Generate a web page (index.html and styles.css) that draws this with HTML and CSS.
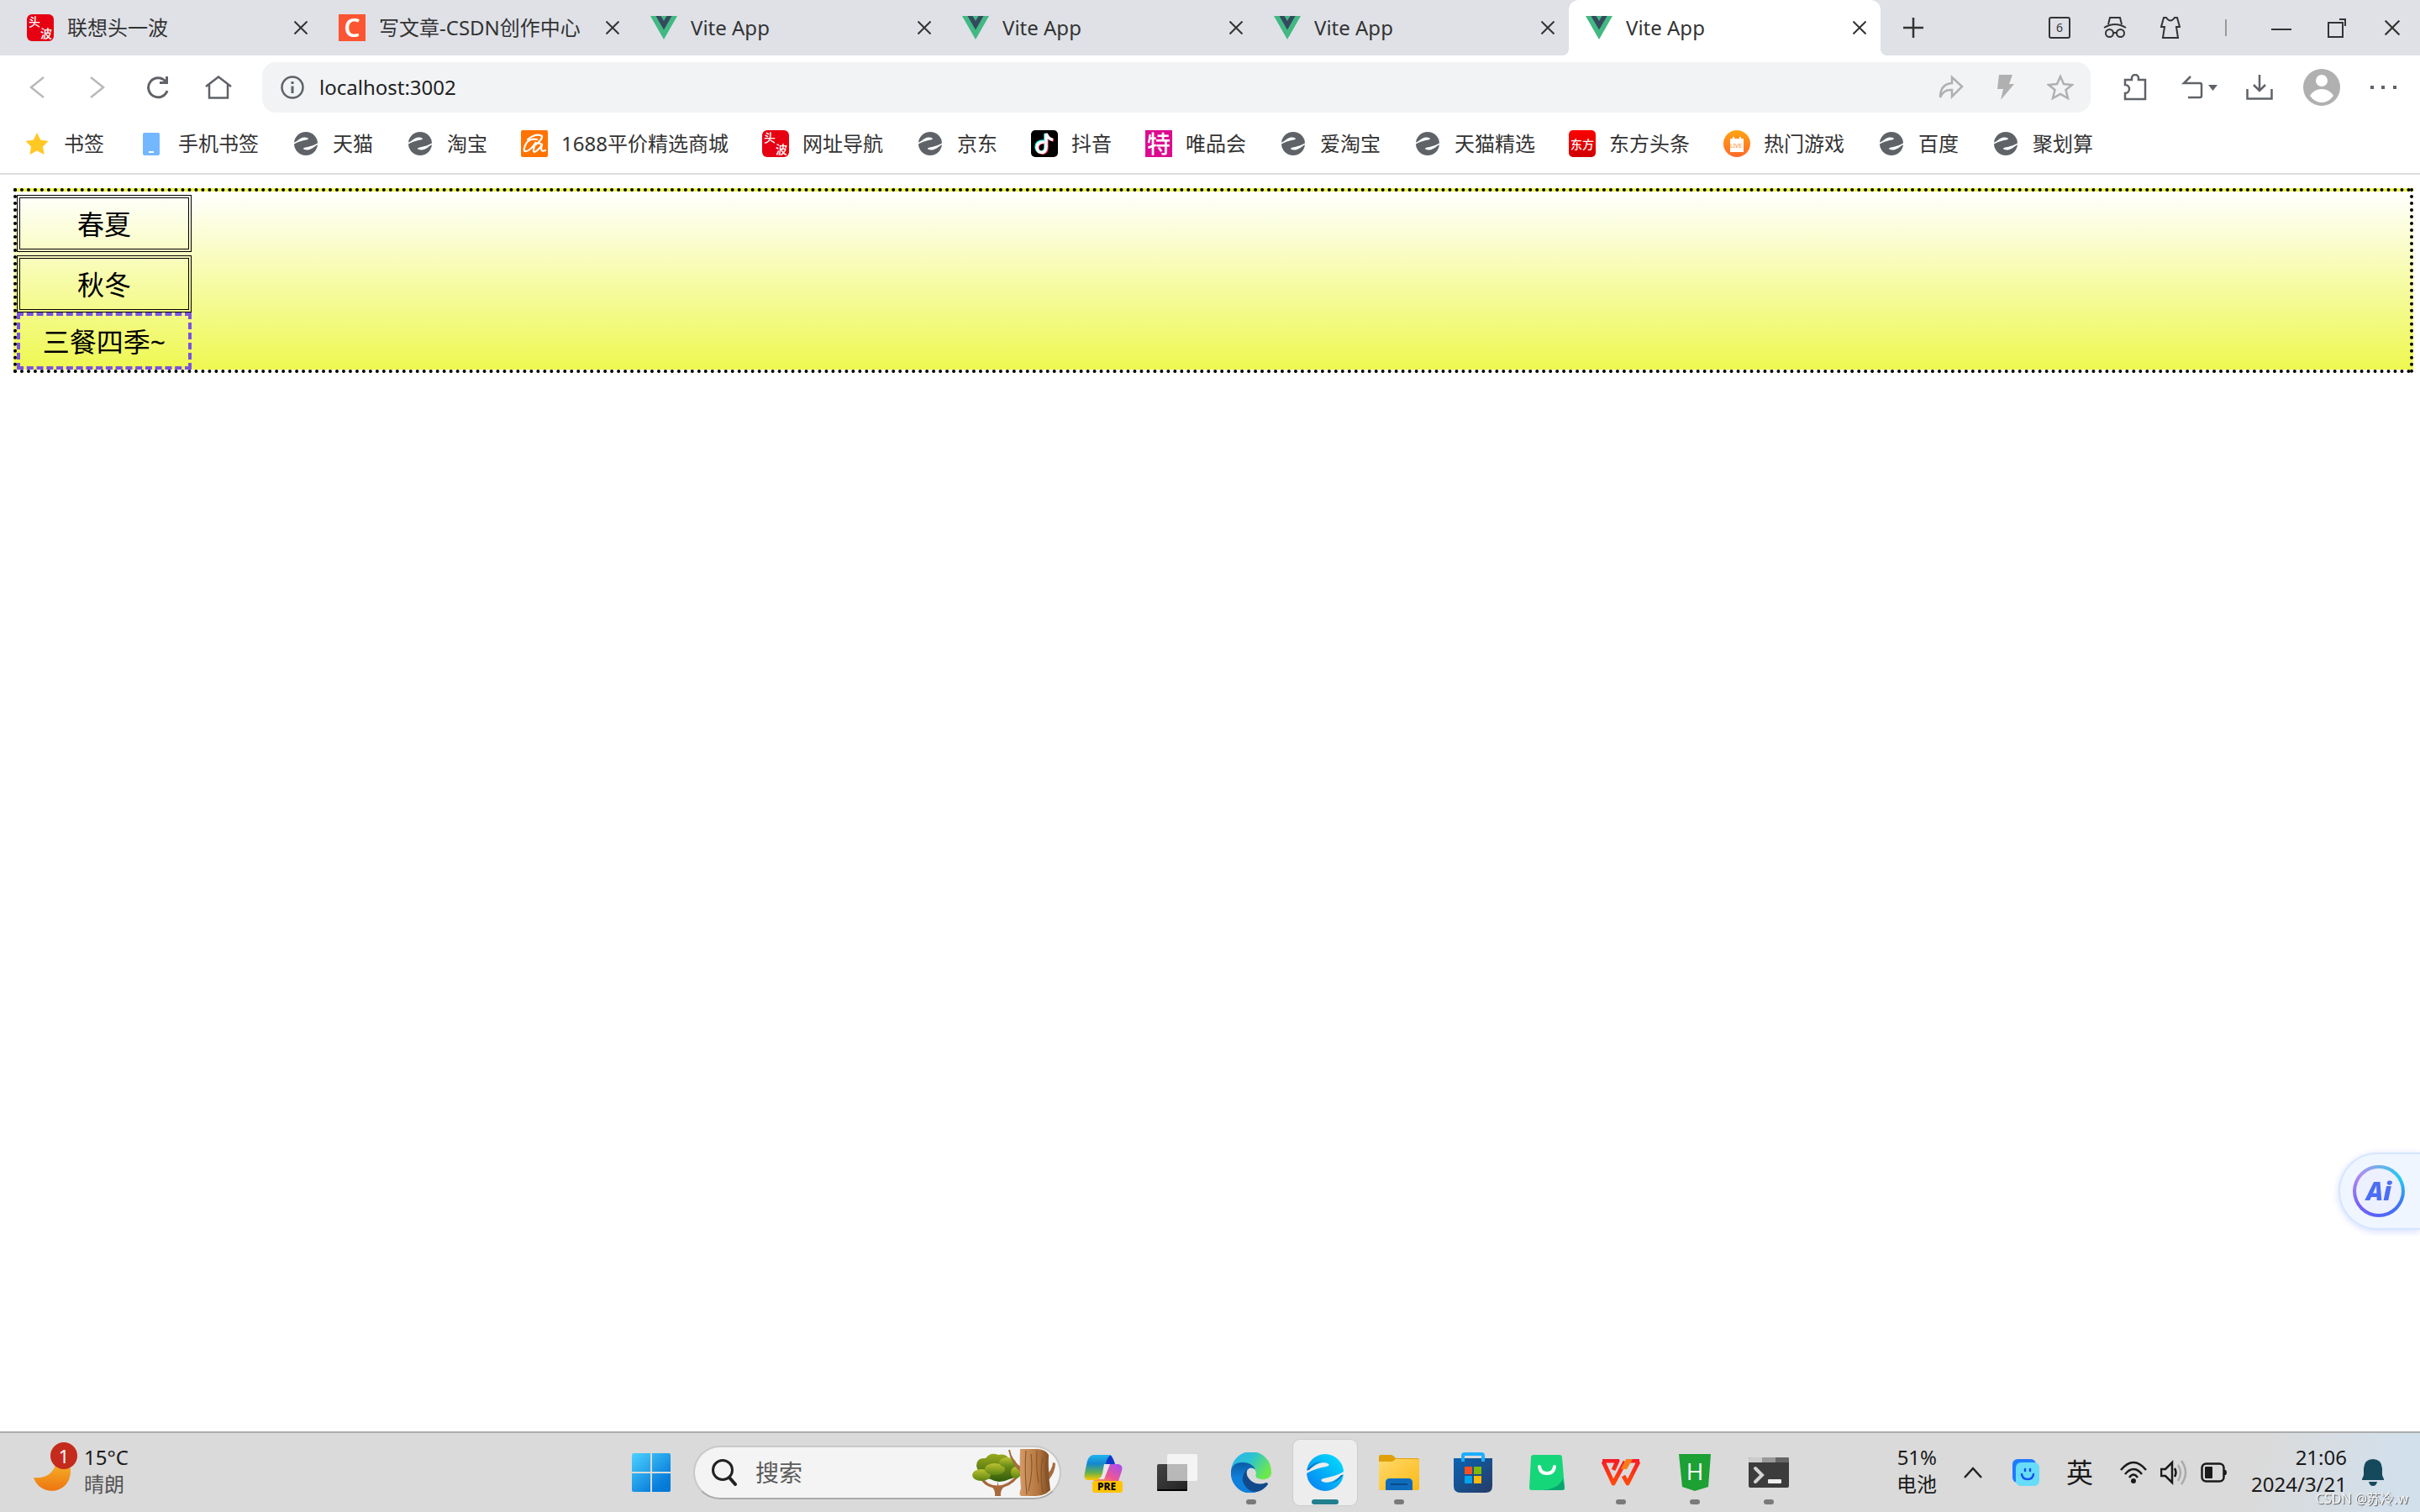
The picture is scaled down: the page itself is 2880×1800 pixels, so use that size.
FILE: index.html
```
<!DOCTYPE html>
<html lang="zh-CN">
<head>
  <meta charset="UTF-8">
  <meta name="viewport" content="width=device-width, initial-scale=1.0">
  <title>Vite App</title>
  <link rel="stylesheet" href="styles.css">
</head>
<body>

<!-- shared icons -->
<svg class="sprite" aria-hidden="true">
  <defs>
    <mask id="swoosh">
      <circle cx="22" cy="22" r="22" fill="#fff"/>
      <path id="cut" d="M-1 20.5C6 18 10 11 19 10.2C24 9.800 27.500 12 26.500 13.500C24 16 12 15.500-1 23.500Z" fill="#000"/>
      <use href="#cut" transform="rotate(180 22 22)"/>
    </mask>
    <linearGradient id="eBlue" x1="1" y1="0" x2="0" y2="1"><stop offset="0" stop-color="#00e5ff"/><stop offset="1" stop-color="#0a7bf0"/></linearGradient>
    <linearGradient id="hot" x1="0" y1="0" x2="0" y2="1"><stop offset="0" stop-color="#ffa414"/><stop offset="1" stop-color="#ff6a2a"/></linearGradient>
    <linearGradient id="dongfang" x1="0" y1="0" x2="0" y2="1"><stop offset="0" stop-color="#fe0000"/><stop offset="1" stop-color="#cf0000"/></linearGradient>
  </defs>
  <symbol id="close" viewBox="0 0 16 16"><path d="M0.500 0.500L15.500 15.500M15.500 0.500L0.500 15.500" fill="none" stroke="#333" stroke-width="2"/></symbol>
  <symbol id="vue" viewBox="0 0 32 28"><path d="M0 0H32L16 28Z" fill="#42b883"/><path d="M6.500 0H12.500L16 6L19.500 0H25.500L16 16.500Z" fill="#35495e"/></symbol>
  <symbol id="e" viewBox="0 0 44 44"><rect width="44" height="44" fill="#5f6368" mask="url(#swoosh)"/></symbol>
</svg>

<header class="tabs">
  <div class="tab">
    <span class="toubo"><i>头</i><i>波</i></span>
    <span class="title">联想头一波</span>
    <button aria-label="关闭"><svg class="x"><use href="#close"/></svg></button>
  </div>
  <div class="tab">
    <span class="csdn">C</span>
    <span class="title">写文章-CSDN创作中心</span>
    <button aria-label="关闭"><svg class="x"><use href="#close"/></svg></button>
  </div>
  <div class="tab">
    <svg class="favicon"><use href="#vue"/></svg>
    <span class="title">Vite App</span>
    <button aria-label="关闭"><svg class="x"><use href="#close"/></svg></button>
  </div>
  <div class="tab">
    <svg class="favicon"><use href="#vue"/></svg>
    <span class="title">Vite App</span>
    <button aria-label="关闭"><svg class="x"><use href="#close"/></svg></button>
  </div>
  <div class="tab">
    <svg class="favicon"><use href="#vue"/></svg>
    <span class="title">Vite App</span>
    <button aria-label="关闭"><svg class="x"><use href="#close"/></svg></button>
  </div>
  <div class="tab active">
    <svg class="favicon"><use href="#vue"/></svg>
    <span class="title">Vite App</span>
    <button aria-label="关闭"><svg class="x"><use href="#close"/></svg></button>
  </div>
  <button class="new-tab" aria-label="新标签页"><svg width="24" height="24"><path d="M12 0V24M0 12H24" stroke="#333" stroke-width="2.500"/></svg></button>

  <div class="window-tools">
    <button class="win"><span class="count">6</span></button>
    <button class="win" aria-label="无痕">
      <svg width="28" height="26" fill="none" stroke="#333" stroke-width="2"><path d="M6 9L8 1H20L22 9M1 13Q14 5 27 13"/><circle cx="7.500" cy="19.500" r="4.500"/><circle cx="20.500" cy="19.500" r="4.500"/><path d="M12 19H16"/></svg>
    </button>
    <button class="win" aria-label="皮肤">
      <svg width="24" height="26" fill="none" stroke="#333" stroke-width="2"><path d="M7 1Q12 8 17 1H20L23 12H19L21 25H3L5 12H1L4 1Z"/></svg>
    </button>
    <span class="win"><i class="divider"></i></span>
    <button class="win" aria-label="最小化"><svg width="24" height="24"><path d="M0 14H24" stroke="#333" stroke-width="2"/></svg></button>
    <button class="win" aria-label="还原"><svg width="22" height="24" fill="none" stroke="#333" stroke-width="2"><path d="M1 6H18V23H1ZM14 2H21V10"/></svg></button>
    <button class="win" aria-label="关闭窗口"><svg class="x wide"><use href="#close"/></svg></button>
  </div>
</header>

<nav class="toolbar">
  <button class="tool" aria-label="后退"><svg width="18" height="26" fill="none" stroke="#b9b9b9" stroke-width="2.500"><path d="M17 1L2 13L17 25"/></svg></button>
  <button class="tool" aria-label="前进"><svg width="18" height="26" fill="none" stroke="#b9b9b9" stroke-width="2.500"><path d="M1 1L16 13L1 25"/></svg></button>
  <button class="tool" aria-label="刷新"><svg width="26" height="28" fill="none" stroke="#5f6368" stroke-width="3"><path d="M22 7A11.500 11.500 0 1 0 24 18M23.500 1V8.500H15"/></svg></button>
  <button class="tool" aria-label="主页"><svg width="32" height="28" fill="none" stroke="#5f6368" stroke-width="2.500"><path d="M1 13L16 1.500L31 13M5 10V26.500H27V10"/></svg></button>

  <div class="address">
    <svg width="28" height="28"><circle cx="14" cy="14" r="12.500" fill="none" stroke="#5f6368" stroke-width="2.500"/><path d="M14 7V10M14 12.500V21" stroke="#5f6368" stroke-width="3"/></svg>
    <input type="text" value="localhost:3002" aria-label="地址">
    <button class="mini" aria-label="分享"><svg width="30" height="30" fill="none" stroke="#b0b0b0" stroke-width="2.500"><path d="M16 3L28 14L16 26V18Q6 17 2 27Q2 11 16 10Z"/></svg></button>
    <button class="mini" aria-label="极速"><svg width="20" height="30"><path d="M2 0H18L14 11H20L4 30L7 17H0Z" fill="#b0b0b0"/></svg></button>
    <button class="mini" aria-label="收藏"><svg width="32" height="32" fill="none" stroke="#b0b0b0" stroke-width="2.500"><path d="M16 3L20 12L30 13L22.500 19L25 29L16 24L7 29L9.500 19L2 13L12 12Z"/></svg></button>
  </div>

  <button class="tool end" aria-label="扩展"><svg width="28" height="32" fill="none" stroke="#5f6368" stroke-width="2.500"><path d="M2 7H10V5A4 4 0 0 1 18 5V7H26V30H2V23A5 5 0 0 0 2 13Z"/></svg></button>
  <button class="tool end" aria-label="恢复"><svg width="48" height="28" viewBox="-6 0 48 28"><path d="M10 1L2 9H21Q23 9 23 11V24Q23 26 21 26H7" fill="none" stroke="#5f6368" stroke-width="2.500"/><path d="M31 11H42L36.500 18Z" fill="#5f6368"/></svg></button>
  <button class="tool end" aria-label="下载"><svg width="32" height="30" fill="none" stroke="#5f6368" stroke-width="2.500"><path d="M16 0V19M9 12L16 19L23 12M1.500 17V28.500H30.500V17"/></svg></button>
  <button class="tool end" aria-label="账户"><svg width="44" height="44"><circle cx="22" cy="22" r="22" fill="#b0b0b0"/><circle cx="22" cy="14" r="7" fill="#fff"/><path d="M8 32Q13 24 22 24T36 32Q30 40 22 40T8 32Z" fill="#fff"/></svg></button>
  <button class="tool end" aria-label="菜单"><svg width="32" height="4"><path d="M0 2H4M13 2H17M27 2H31" stroke="#5f6368" stroke-width="4"/></svg></button>
</nav>

<nav class="bookmarks">
  <a href="#"><svg viewBox="0 0 32 32"><path d="M16 3L20.200 11.500L29.500 13L23 19.500L24.500 29L16 24.500L7.500 29L9 19.500L2.500 13L11.800 11.500Z" fill="#ffc824"/></svg>书签</a>
  <a href="#"><svg viewBox="0 0 32 32"><rect x="6" y="3" width="20" height="27" rx="2" fill="#73b8ff"/><path d="M13 26H19" stroke="#fff" stroke-width="2"/></svg>手机书签</a>
  <a href="#"><svg class="small"><use href="#e"/></svg>天猫</a>
  <a href="#"><svg class="small"><use href="#e"/></svg>淘宝</a>
  <a href="#"><svg viewBox="0 0 32 32"><rect width="32" height="32" rx="2" fill="#ff7300"/><path d="M8 11Q18 3 25 7Q26 10 19 16M19 11Q10 9 6 16Q2 24 5 25Q10 26 18 14Q13 25 16 26Q21 24 25 17Q20 14 18 17M25 17Q22 27 29 24" fill="none" stroke="#fff" stroke-width="2.200" stroke-linecap="round"/></svg>1688平价精选商城</a>
  <a href="#"><span class="toubo"><i>头</i><i>波</i></span>网址导航</a>
  <a href="#"><svg class="small"><use href="#e"/></svg>京东</a>
  <a href="#">
    <svg viewBox="0 0 32 32"><rect width="32" height="32" rx="5" fill="#000"/>
      <g fill="none" stroke-width="3.500"><path d="M15 13Q6 13 6 20Q7 27 13 26Q17 25 17 20V4Q19 10 25 11" stroke="#25f4ee"/><path d="M17 15Q8 14 8 21Q9 28 15 27Q19 26 19 21V5Q21 11 27 12" stroke="#fe2c55"/><path d="M16 14Q7 14 7 21Q8 27 14 26.500Q18 25 18 20V4Q20 10 26 11.500" stroke="#fff"/></g></svg>抖音</a>
  <a href="#"><span class="vip">特</span>唯品会</a>
  <a href="#"><svg class="small"><use href="#e"/></svg>爱淘宝</a>
  <a href="#"><svg class="small"><use href="#e"/></svg>天猫精选</a>
  <a href="#"><svg viewBox="0 0 32 32"><rect width="32" height="32" rx="5" fill="url(#dongfang)"/><text class="glyph" x="2" y="22" font-size="14">东方</text></svg>东方头条</a>
  <a href="#"><svg viewBox="0 0 32 32"><circle cx="16" cy="16" r="16" fill="url(#hot)"/><path d="M8 10H11V8H13V10H19V8H21V10H24V26H8Z" fill="#fff"/><text x="8" y="21" font-size="7" fill="#ff8a1f">LIVE</text></svg>热门游戏</a>
  <a href="#"><svg class="small"><use href="#e"/></svg>百度</a>
  <a href="#"><svg class="small"><use href="#e"/></svg>聚划算</a>
</nav>

<main>
  <div class="box">
    <div class="item">春夏</div>
    <div class="item">秋冬</div>
    <div class="item dashed">三餐四季~</div>
  </div>
</main>

<button class="ai" aria-label="Ai"><span class="ring"><b>Ai</b></span></button>

<footer class="taskbar">
  <div class="weather">
    <div class="moon">
      <svg width="44" height="44" viewBox="0 0 44 44"><defs><linearGradient id="m" x1="0" y1="0" x2="0" y2="1"><stop offset="0" stop-color="#f7c630"/><stop offset="1" stop-color="#ee7410"/></linearGradient></defs><path d="M0 28Q26 31 29 0Q44 4 44 20C44 48 8 52 0 28Z" fill="url(#m)"/></svg>
      <span class="badge">1</span>
    </div>
    <div class="two-lines"><span>15°C</span><span class="muted">晴朗</span></div>
  </div>

  <div class="apps">
    <button class="app" aria-label="开始">
      <svg width="46" height="46"><defs><linearGradient id="w" gradientUnits="userSpaceOnUse" x1="0" y1="0" x2="40" y2="46"><stop offset="0" stop-color="#4cd2ff"/><stop offset=".8" stop-color="#0a80dc"/><stop offset="1" stop-color="#0078d4"/></linearGradient></defs><path d="M2 0H22V22H0V2Q0 0 2 0ZM24 0H44Q46 0 46 2V22H24ZM0 24H22V46H2Q0 46 0 44ZM24 24H46V44Q46 46 44 46H24Z" fill="url(#w)"/></svg>
    </button>

    <div class="search">
      <svg width="30" height="32" fill="none" stroke="#222" stroke-width="3"><circle cx="13" cy="13" r="11.500"/><path d="M21 22L28 30" stroke-width="4" stroke-linecap="round"/></svg>
      <input type="text" placeholder="搜索" aria-label="搜索">
      <svg class="tree" width="100" height="56" viewBox="0 0 100 56">
        <defs>
          <linearGradient id="leaf" x1="0" y1="0" x2="0" y2="1"><stop offset="0" stop-color="#9aaa1c"/><stop offset="1" stop-color="#2f5c0c"/></linearGradient>
          <linearGradient id="leafTop" x1="0" y1="0" x2="0" y2="1"><stop offset="0" stop-color="#bcc230"/><stop offset="1" stop-color="#5c8412"/></linearGradient>
          <linearGradient id="bark" x1="0" y1="0" x2="1" y2="0"><stop offset="0" stop-color="#d49a68"/><stop offset=".6" stop-color="#b4763e"/><stop offset="1" stop-color="#7c4a22"/></linearGradient>
        </defs>
        <path d="M10 33Q16 45 30 45Q44 45 54 32" fill="none" stroke="#a8683a" stroke-width="3"/>
        <path d="M27 56Q28 48 22 44L30 46V38L32 46L40 43Q33 48 34 56Z" fill="#a8683a"/>
        <path d="M5 20Q5 10 16 11Q22 3 31 7Q40 5 44 12Q54 14 56 24Q54 34 44 36Q32 42 22 36Q8 34 5 20Z" fill="url(#leaf)"/>
        <ellipse cx="11" cy="31" rx="11" ry="7" fill="url(#leafTop)"/><ellipse cx="27" cy="24" rx="12" ry="7" fill="url(#leafTop)"/><ellipse cx="42" cy="16" rx="10" ry="6" fill="url(#leafTop)"/><ellipse cx="52" cy="28" rx="6" ry="7" fill="url(#leafTop)"/>
        <path d="M45 1Q47 14 59 22V29Q46 18 43 1ZM90 38Q99 28 99 17L96 16Q96 25 86 32Z" fill="#a46c40"/>
        <path d="M57 0H78Q88 1 91 7Q90 30 93 49Q86 56 76 56H58Q55 54 58 47Q56 25 57 0Z" fill="url(#bark)"/>
        <path d="M64 2Q62 25 65 54M70 6Q73 25 67 50M77 2Q76 28 79 40M84 10Q80 30 84 52M88 14Q86 28 89 42" fill="none" stroke="#83502a" stroke-width="1"/>
      </svg>
    </div>

    <button class="app" aria-label="Copilot">
      <svg width="48" height="48" viewBox="0 0 48 48">
        <defs><linearGradient id="c1" x1="0" y1="0" x2="0" y2="1"><stop offset="0" stop-color="#20b4ee"/><stop offset=".35" stop-color="#1487d0"/><stop offset=".7" stop-color="#62b14e"/><stop offset="1" stop-color="#ffc800"/></linearGradient><linearGradient id="c2" x1="1" y1="0" x2="0" y2="1"><stop offset="0" stop-color="#a34dfa"/><stop offset=".6" stop-color="#ee5890"/><stop offset="1" stop-color="#ff9a50"/></linearGradient></defs>
        <path d="M24 3H32Q35 4 38 14H24Z" fill="#1238c8"/>
        <path d="M30 14H42Q48 15 46 22L42 34H12L14 31Q22 32 24 25Z" fill="url(#c2)"/>
        <path d="M12 3H33Q29 5 27 13L23 26Q21 33 15 33H5Q0 32 2 24L5 10Q7 4 12 3Z" fill="url(#c1)"/>
        <path d="M25 14H32L25 32H18Q22 30 23 25Z" fill="#e6e6e6"/>
        <rect x="11" y="34" width="36" height="14" rx="3" fill="#ffc400"/><text class="pre" x="17" y="45">PRE</text>
      </svg>
    </button>
    <button class="app" aria-label="任务视图">
      <svg width="48" height="44"><defs><linearGradient id="tv" x1="0" y1="0" x2="1" y2="1"><stop offset="0" stop-color="#444"/><stop offset="1" stop-color="#222"/></linearGradient></defs><rect y="12" width="36" height="32" rx="2" fill="url(#tv)"/><rect y="42" width="36" height="2" rx="1" fill="#000"/><rect x="12" width="36" height="32" rx="2" fill="#f4f4f4"/><path d="M12 12H36V32H12Z" fill="#b8b8b8"/></svg>
    </button>
    <button class="app running" aria-label="Edge">
      <svg width="48" height="48" viewBox="0 0 48 48">
        <defs><linearGradient id="ed1" x1="0" y1="0" x2="1" y2=".5"><stop offset="0" stop-color="#2cb1f2"/><stop offset=".5" stop-color="#2cc3d2"/><stop offset="1" stop-color="#6be84e"/></linearGradient><linearGradient id="ed2" x1="0" y1="0" x2="0" y2="1"><stop offset="0" stop-color="#0c5ba4"/><stop offset=".5" stop-color="#0f7fdc"/><stop offset="1" stop-color="#1080d8"/></linearGradient></defs>
        <path d="M0 23A24 24 0 0 1 48 23C49 31 39 34 32 31Q28 29 30 25Q29 18 22 18L0 23Z" fill="url(#ed1)"/>
        <path d="M0 22Q2 12 12 12Q24 11 29 20Q22 16 19 22Q12 36 30 48A24 24 0 0 1 0 22Z" fill="url(#ed2)"/>
        <path d="M19 20Q10 30 16 39Q22 48 31 47Q39 45 44 38Q44 36 42 36Q32 40 24 34Q17 28 19 20Z" fill="#114a8c"/>
      </svg>
    </button>
    <button class="app running current" aria-label="联想浏览器">
      <svg width="44" height="44" viewBox="0 0 44 44"><rect width="44" height="44" fill="url(#eBlue)" mask="url(#swoosh)"/><path d="M1 19Q7 10 18 9Q8 11 3 19ZM43 25Q37 34 26 35Q36 33 41 25Z" fill="#0e5faa"/></svg>
    </button>
    <button class="app running" aria-label="文件资源管理器">
      <svg width="48" height="42"><defs><linearGradient id="fo" x1="0" y1="0" x2="1" y2="1"><stop offset="0" stop-color="#ffda6c"/><stop offset="1" stop-color="#fcb814"/></linearGradient></defs><path d="M0 2Q0 0 2 0H14Q17 0 20 4H46Q48 4 48 6V16H0Z" fill="#e0a00a"/><path d="M0 8H16L20 5H46Q48 5 48 7V40Q48 42 46 42H2Q0 42 0 40Z" fill="url(#fo)"/><path d="M8 42V33Q8 28 13 28H35Q40 28 40 33V42Z" fill="#0f6cbd"/><path d="M14 35H34" stroke="#0b4a86" stroke-width="2"/></svg>
    </button>
    <button class="app" aria-label="应用商店">
      <svg width="46" height="48"><defs><linearGradient id="st" x1="0" y1="0" x2="1" y2="1"><stop offset="0" stop-color="#0a64b4"/><stop offset="1" stop-color="#263b66"/></linearGradient></defs><path d="M0 7H46V40Q46 48 38 48H8Q0 48 0 40Z" fill="url(#st)"/><path d="M11 11V4Q11 2 13 2H33Q35 2 35 4V11" fill="none" stroke="#1eaeff" stroke-width="4"/><path d="M13 17H22V26H13Z" fill="#f65022"/><path d="M24 17H33V26H24Z" fill="#7fba00"/><path d="M13 28H22V37H13Z" fill="#00a4ef"/><path d="M24 28H33V37H24Z" fill="#ffb900"/></svg>
    </button>
    <button class="app" aria-label="联想应用商店">
      <svg width="42" height="42"><path d="M5 0H36Q39 0 39 3L42 39Q42 42 39 42H3Q0 42 0 39L2 3Q2 0 5 0Z" fill="#16d67a"/><path d="M16 42Q36 40 40 28L42 39Q42 42 39 42Z" fill="#07a66e"/><path d="M12 14Q13 22 21 22T30 14" fill="none" stroke="#fff" stroke-width="4" stroke-linecap="round"/></svg>
    </button>
    <button class="app running" aria-label="WPS">
      <svg width="48" height="32"><defs><linearGradient id="wp" x1="0" y1="0" x2="0" y2="1"><stop offset="0" stop-color="#f81c24"/><stop offset="1" stop-color="#ff4a0c"/></linearGradient></defs><path d="M2 2H20L15 13M3 3L15 29L29 3M45 3L32 29L27 20M30 2H46" fill="none" stroke="url(#wp)" stroke-width="5" stroke-linejoin="round"/><path d="M30 0H38L31 12H24Z" fill="#fb7d1a"/></svg>
    </button>
    <button class="app running" aria-label="HBuilder">
      <svg width="38" height="44"><path d="M0 0H38L35 39L19 44L4 39Z" fill="#1da034"/><text class="h" x="19" y="31">H</text></svg>
    </button>
    <button class="app running" aria-label="终端">
      <svg width="48" height="36"><rect width="48" height="36" rx="2" fill="#3c3c3c"/><path d="M0 6V2Q0 0 2 0H16V6Z" fill="#ccc"/><path d="M16 0H32V6H16Z" fill="#999"/><path d="M32 0H46Q48 0 48 2V6H32Z" fill="#666"/><path d="M8 13L16 21L8 29" fill="none" stroke="#d4d4d4" stroke-width="4" stroke-linecap="round"/><rect x="23" y="26" width="16" height="5" rx="1" fill="#eee"/></svg>
    </button>
  </div>

  <div class="tray">
    <div class="two-lines battery"><span>51%</span><span>电池</span></div>
    <button aria-label="显示隐藏的图标"><svg width="22" height="14" fill="none" stroke="#222" stroke-width="2.500"><path d="M1 13L11 2L21 13"/></svg></button>
    <button aria-label="助手"><svg width="32" height="32"><rect width="28" height="28" rx="6" fill="#1f7bff"/><rect x="4" y="4" width="28" height="28" rx="6" fill="#67dcf8"/><path d="M11 18Q12 24 18 24T25 18M15 12V14M21 12V14" fill="none" stroke="#1450f0" stroke-width="2.500" stroke-linecap="round"/></svg></button>
    <button class="ime">英</button>
    <button class="status" aria-label="网络和音量">
      <svg width="32" height="28" fill="none" stroke="#1a1a1a" stroke-width="2.500"><path d="M1 11Q16-7 31 11M6 16Q16 4 26 16M11 20Q16 13 21 20"/><circle cx="16" cy="24" r="3" fill="#1a1a1a" stroke="none"/></svg>
      <svg width="32" height="32" fill="none" stroke="#1a1a1a" stroke-width="2.500"><path d="M1 12V20H6L14 28V4L6 12Z"/><path d="M17 11Q20 16 17 21"/><path d="M21 7Q27 16 21 26M25 2Q35 16 25 30" stroke="#aaa"/></svg>
      <svg width="32" height="24" fill="none" stroke="#1a1a1a" stroke-width="2.500"><rect x="1.500" y="1.500" width="26" height="21" rx="5"/><rect x="5" y="5" width="9" height="14" rx="1" fill="#1a1a1a" stroke="none"/><path d="M28 9H30Q32 12 30 15H28Z" fill="#1a1a1a" stroke="none"/></svg>
    </button>
    <div class="two-lines clock"><span>21:06</span><span>2024/3/21</span></div>
    <button aria-label="通知"><svg width="26" height="32"><path d="M13 0Q23 0 24 11V19L26 24V25H0V24L2 19V11Q3 0 13 0ZM8 27H18Q17 32 13 32T8 27Z" fill="#154a5c"/></svg></button>
  </div>
</footer>

<span class="watermark">CSDN @苏冷.w</span>

</body>
</html>
```
FILE: styles.css
```
* {
  box-sizing: border-box;
}
body {
  margin: 0;
  min-height: 100vh;
  display: flex;
  flex-direction: column;
  background-color: #fff;
  font-family: "Noto Sans", "Noto Sans CJK SC", sans-serif;
  font-size: 24px;
  line-height: 32px;
  color: #333;
}
button, input {
  font: inherit;
  color: inherit;
  border: none;
  padding: 0;
  background: none;
}
button {
  display: flex;
  align-items: center;
  justify-content: center;
  cursor: pointer;
}
svg {
  flex-shrink: 0;
}
.sprite {
  position: absolute;
  width: 0;
  height: 0;
}
.glyph {
  fill: #fff;
  font-family: "Noto Sans CJK SC", sans-serif;
  font-weight: 500;
}

/* text logos */
.toubo, .csdn, .vip {
  flex-shrink: 0;
  width: 32px;
  height: 32px;
  color: #fff;
  font-weight: 500;
  text-align: center;
}
.toubo {
  display: flex;
  flex-direction: column;
  justify-content: center;
  padding: 0 2px;
  border-radius: 6px;
  background-color: #e60012;
  font-size: 14px;
  line-height: 14px;
}
.toubo i {
  font-style: normal;
  text-align: left;
}
.toubo i + i {
  text-align: right;
}
.csdn {
  background-color: #fc5531;
  font-size: 30px;
  font-weight: 600;
}
.vip {
  background-color: #dc0a8e;
  font-size: 28px;
}

/* tab strip */
.tabs {
  display: flex;
  height: 66px;
  padding-left: 12px;
  background-color: #dfe1e7;
}
.tab {
  position: relative;
  flex: 0 1 371px;
  display: flex;
  align-items: center;
  gap: 16px;
  padding: 0 17px 0 20px;
  white-space: nowrap;
}
.title {
  flex: 1;
}
.tab.active {
  background-color: #fff;
  border-radius: 12px 12px 0 0;
}
.tab.active::before, .tab.active::after {
  content: "";
  position: absolute;
  bottom: 0;
  width: 8px;
  height: 8px;
  background: radial-gradient(circle at 0 0, transparent 8px, #fff 8px);
}
.tab.active::before {
  left: -8px;
}
.tab.active::after {
  right: -8px;
  transform: scaleX(-1);
}
.favicon {
  width: 32px;
  height: 32px;
}
.x {
  width: 16px;
  height: 16px;
}
.x.wide {
  width: 18px;
  height: 18px;
}
.new-tab {
  width: 78px;
}
.window-tools {
  display: flex;
  margin-left: auto;
}
.win {
  display: flex;
  align-items: center;
  justify-content: center;
  width: 66px;
}
.count {
  width: 26px;
  height: 26px;
  border: 2px solid #333;
  border-radius: 3px;
  font-size: 14px;
  line-height: 22px;
}
.divider {
  width: 2px;
  height: 20px;
  background-color: #999;
}

/* toolbar */
.toolbar {
  display: flex;
  align-items: center;
  height: 76px;
  padding: 0 6px 0 8px;
}
.tool {
  width: 72px;
  height: 60px;
}
.tool.end {
  width: 74px;
}
.address {
  flex: 1;
  display: flex;
  align-items: center;
  height: 60px;
  margin: 0 16px;
  padding: 0 4px 0 22px;
  border-radius: 16px;
  background-color: #f1f3f5;
}
.address input {
  flex: 1;
  margin-left: 18px;
  color: #222;
}
.mini {
  width: 65px;
  height: 60px;
}

/* bookmarks */
.bookmarks {
  display: flex;
  align-items: center;
  gap: 40px;
  height: 66px;
  padding: 0 28px 6px;
  border-bottom: 2px solid #ddd;
  white-space: nowrap;
}
.bookmarks a {
  display: flex;
  align-items: center;
  gap: 16px;
  color: #333;
  text-decoration: none;
}
.bookmarks svg {
  width: 32px;
  height: 32px;
}
.bookmarks svg.small {
  padding: 2px;
}

/* page */
main {
  flex: 1;
  padding: 16px 8px 16px 16px;
}
.box {
  padding-top: 4px;
  border: 4px dotted #000;
  background-image: linear-gradient(#fff, #eef850);
}
.item {
  width: 208px;
  height: 68px;
  margin-bottom: 4px;
  border: 4px double #000;
  font-size: 32px;
  line-height: 62px;
  text-align: center;
  color: #000;
}
.item:nth-child(2) {
  margin-bottom: 0;
}
.item.dashed {
  margin-bottom: 0;
  border: 4px dashed #7b52e0;
}
.ai {
  position: fixed;
  right: 0;
  bottom: 336px;
  width: 97px;
  height: 92px;
  padding-left: 15px;
  justify-content: flex-start;
  border: 2px solid #d6e6ff;
  border-right: none;
  border-radius: 46px 0 0 46px;
  background-color: #eff6ff;
  box-shadow: 0 2px 8px #d4dcff;
}
.ring {
  display: flex;
  align-items: center;
  justify-content: center;
  width: 62px;
  height: 62px;
  border: 4px solid transparent;
  border-radius: 50%;
  background: linear-gradient(#edf0ff, #edf0ff) padding-box, conic-gradient(#6fb0e8, #22c8f4 60deg, #3b78f4 120deg, #5562f6 180deg, #7a62f8 240deg, #b08cf0 310deg, #6fb0e8) border-box;
}
.ring b {
  font-family: "Open Sans", sans-serif;
  font-size: 30px;
  font-style: italic;
  font-weight: 800;
  color: #4c6ef5;
}

/* taskbar */
.taskbar {
  display: grid;
  grid-template-columns: 1fr auto 1fr;
  align-items: center;
  height: 96px;
  border-top: 2px solid #adadad;
  background: linear-gradient(100deg, #dadada 93%, #d2e0ec 99%);
  color: #1a1a1a;
}
.weather {
  display: flex;
  align-items: center;
  gap: 16px;
  padding-left: 40px;
}
.moon {
  position: relative;
  width: 44px;
  height: 44px;
}
.badge {
  position: absolute;
  left: 20px;
  top: -14px;
  width: 32px;
  height: 32px;
  border-radius: 50%;
  background-color: #c42b1c;
  color: #fff;
  font-size: 22px;
  text-align: center;
}
.two-lines {
  display: flex;
  flex-direction: column;
  padding-bottom: 4px;
}
.muted {
  color: #555;
}
.apps {
  display: flex;
  align-items: center;
}
.app {
  position: relative;
  width: 76px;
  height: 78px;
  margin: 0 6px;
  border-radius: 8px;
}
.app.running::after {
  content: "";
  position: absolute;
  bottom: 1px;
  width: 12px;
  height: 6px;
  border-radius: 3px;
  background-color: #7a7a7a;
}
.app.current {
  background-color: #ededed;
  box-shadow: 0 0 0 1px #ccc;
}
.app.current::after {
  width: 32px;
  background-color: #22808f;
}
.search {
  display: flex;
  align-items: center;
  width: 438px;
  height: 64px;
  margin: 0 6px;
  padding: 0 4px 0 20px;
  border: 2px solid #c8c8c8;
  border-bottom-color: #aaa;
  border-radius: 32px;
  background-color: #f4f4f4;
}
.search input {
  flex: 1;
  min-width: 0;
  margin-left: 22px;
  font-size: 28px;
}
.search input::placeholder {
  color: #5c5c5c;
}
.pre {
  font-size: 12px;
  font-weight: 800;
}
.h {
  fill: #fff;
  font-family: "Open Sans", sans-serif;
  font-size: 28px;
  text-anchor: middle;
}
.tray {
  display: flex;
  align-items: center;
  justify-content: flex-end;
  padding-right: 43px;
}
.battery, .clock {
  text-align: right;
}
.tray button {
  margin-left: 36px;
}
.tray .battery + button {
  margin-left: 32px;
}
.tray .ime {
  margin-left: 32px;
  font-size: 32px;
}
.tray .status {
  gap: 16px;
  margin-left: 32px;
}
.clock {
  margin-left: 28px;
}
.tray .clock + button {
  margin-left: 18px;
}
.watermark {
  position: fixed;
  right: 14px;
  bottom: 4px;
  font-size: 16px;
  line-height: 24px;
  color: #f4f4f4;
  text-shadow: 1px 1px 1px #555;
}
```
